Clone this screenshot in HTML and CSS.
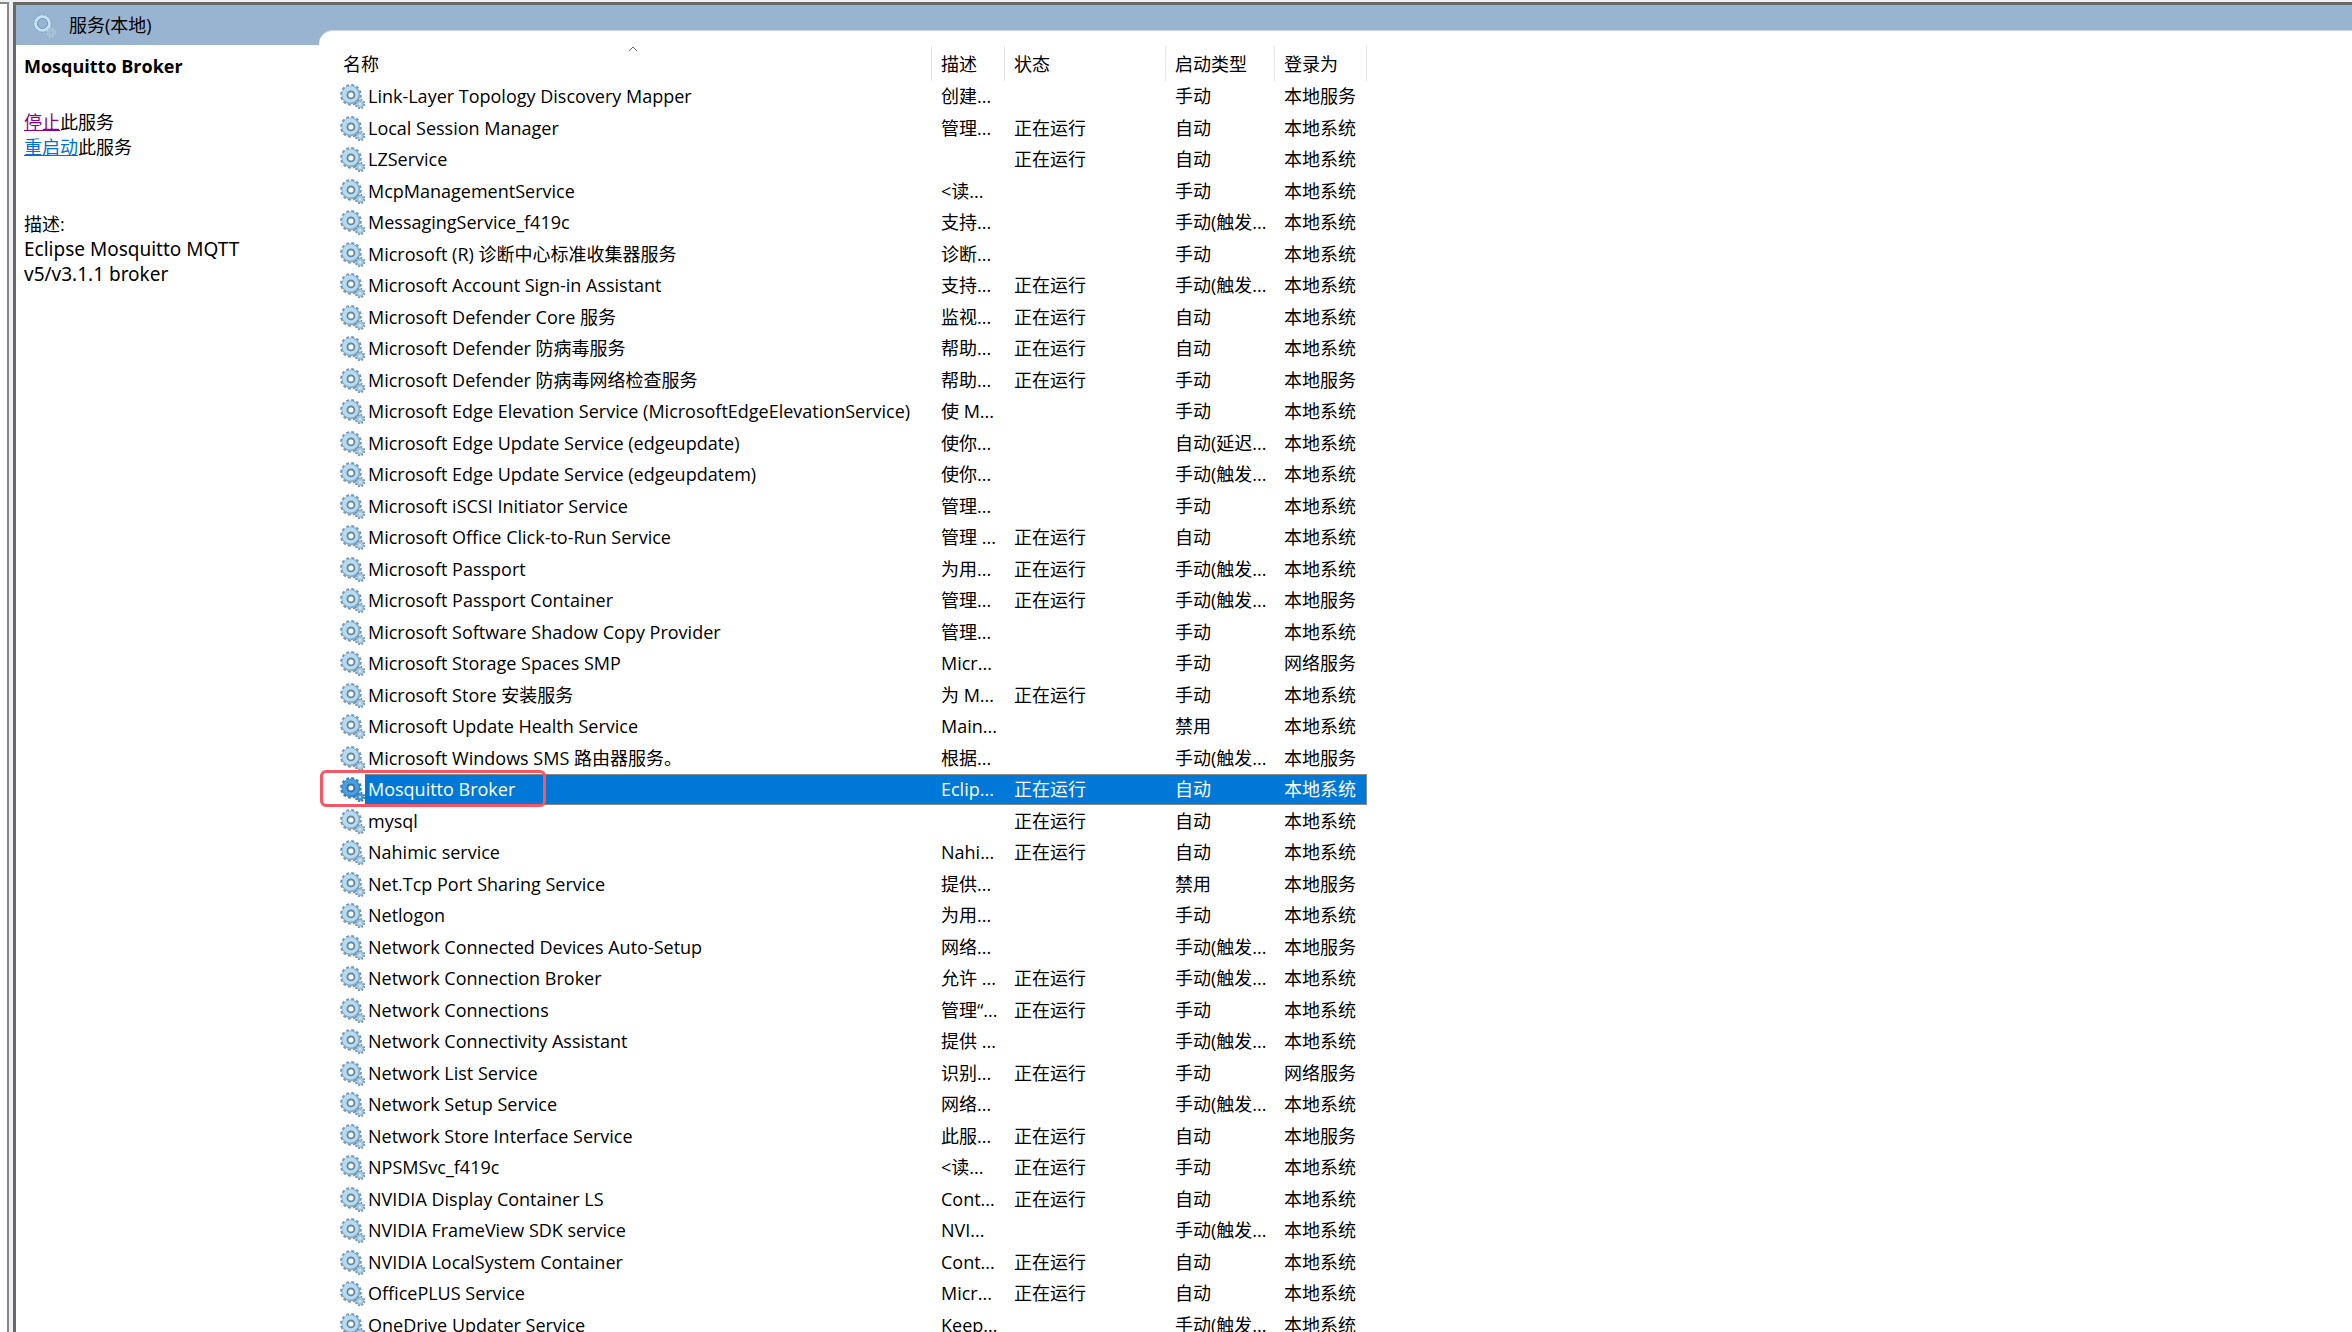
FILE: index.html
```
<!DOCTYPE html>
<html lang="zh-CN">
<head>
    <meta charset="UTF-8">
    <meta name="viewport" content="width=device-width, initial-scale=1.0">
    <title>服务</title>
    <link rel="stylesheet" href="styles.css">
</head>
<body>
    <svg class="defs" aria-hidden="true">
        <symbol id="gear" viewBox="0 0 24 24">
            <circle class="teeth" cx="10.5" cy="10.5" r="8.8" stroke-width="3.2" stroke-dasharray="2.6 2.01"/>
            <circle class="edge" cx="10.5" cy="10.5" r="5.8" stroke-width="6.4"/>
            <circle class="body" cx="10" cy="10" r="5.6" stroke-width="4.4"/>
            <circle class="rim" cx="10.5" cy="10.5" r="3.4" stroke-width="1.6"/>
            <circle class="teeth" cx="19.2" cy="19.2" r="3.8" stroke-width="2.6" stroke-dasharray="1.6 1.38"/>
            <circle class="edge" cx="19.2" cy="19.2" r="2.2" stroke-width="2.6"/>
            <circle class="body" cx="19.2" cy="19.2" r="2" stroke-width="1.2"/>
        </symbol>
    </svg>

    <div class="tree"></div>
    <div class="console">
        <div class="title-bar">
            <svg class="title-icon" viewBox="0 0 24 24" aria-hidden="true">
                <circle cx="9.5" cy="9.5" r="8.5" fill="none" stroke="#86a9c6" stroke-width="2" stroke-dasharray="2 2.45"/>
                <circle cx="9.5" cy="9.5" r="6.8" fill="none" stroke="#c4e4f4" stroke-width="3"/>
                <circle cx="9.5" cy="9.5" r="5" fill="none" stroke="#7595b8" stroke-width="1"/>
                <circle cx="18" cy="18.5" r="3" fill="none" stroke="#a9c6da" stroke-width="4" stroke-dasharray="1.6 0.76"/>
            </svg>
            <span>服务(本地)</span>
        </div>
        <div class="content">
            <div class="info">
                <h1>Mosquitto Broker</h1>
                <p class="actions">
                    <a href="#" class="stop">停止</a>此服务<br>
                    <a href="#" class="restart">重启动</a>此服务
                </p>
                <p>描述:</p>
                <p class="description">Eclipse Mosquitto MQTT v5/v3.1.1 broker</p>
            </div>
            <div class="list">
                <table>
                    <thead>
                        <tr>
                            <th class="col-name">名称<svg class="sort" viewBox="0 0 10 6" aria-hidden="true"><path d="M1 5l4-4 4 4"/></svg></th>
                            <th class="col-desc">描述</th>
                            <th class="col-status">状态</th>
                            <th class="col-type">启动类型</th>
                            <th class="col-logon">登录为</th>
                        </tr>
                    </thead>
                    <tbody id="service-list"></tbody>
                </table>
            </div>
        </div>
    </div>

    <script>
        const R = '正在运行';
        const SYS = '本地系统';
        const LOCAL = '本地服务';
        const NET = '网络服务';
        const TRIGGER = '手动(触发...';

        // name, description, status, startup type, log on as
        const services = [
            ['Link-Layer Topology Discovery Mapper', '创建...', '', '手动', LOCAL],
            ['Local Session Manager', '管理...', R, '自动', SYS],
            ['LZService', '', R, '自动', SYS],
            ['McpManagementService', '<读...', '', '手动', SYS],
            ['MessagingService_f419c', '支持...', '', TRIGGER, SYS],
            ['Microsoft (R) 诊断中心标准收集器服务', '诊断...', '', '手动', SYS],
            ['Microsoft Account Sign-in Assistant', '支持...', R, TRIGGER, SYS],
            ['Microsoft Defender Core 服务', '监视...', R, '自动', SYS],
            ['Microsoft Defender 防病毒服务', '帮助...', R, '自动', SYS],
            ['Microsoft Defender 防病毒网络检查服务', '帮助...', R, '手动', LOCAL],
            ['Microsoft Edge Elevation Service (MicrosoftEdgeElevationService)', '使 M...', '', '手动', SYS],
            ['Microsoft Edge Update Service (edgeupdate)', '使你...', '', '自动(延迟...', SYS],
            ['Microsoft Edge Update Service (edgeupdatem)', '使你...', '', TRIGGER, SYS],
            ['Microsoft iSCSI Initiator Service', '管理...', '', '手动', SYS],
            ['Microsoft Office Click-to-Run Service', '管理 ...', R, '自动', SYS],
            ['Microsoft Passport', '为用...', R, TRIGGER, SYS],
            ['Microsoft Passport Container', '管理...', R, TRIGGER, LOCAL],
            ['Microsoft Software Shadow Copy Provider', '管理...', '', '手动', SYS],
            ['Microsoft Storage Spaces SMP', 'Micr...', '', '手动', NET],
            ['Microsoft Store 安装服务', '为 M...', R, '手动', SYS],
            ['Microsoft Update Health Service', 'Main...', '', '禁用', SYS],
            ['Microsoft Windows SMS 路由器服务。', '根据...', '', TRIGGER, LOCAL],
            ['Mosquitto Broker', 'Eclip...', R, '自动', SYS],
            ['mysql', '', R, '自动', SYS],
            ['Nahimic service', 'Nahi...', R, '自动', SYS],
            ['Net.Tcp Port Sharing Service', '提供...', '', '禁用', LOCAL],
            ['Netlogon', '为用...', '', '手动', SYS],
            ['Network Connected Devices Auto-Setup', '网络...', '', TRIGGER, LOCAL],
            ['Network Connection Broker', '允许 ...', R, TRIGGER, SYS],
            ['Network Connections', '管理“...', R, '手动', SYS],
            ['Network Connectivity Assistant', '提供 ...', '', TRIGGER, SYS],
            ['Network List Service', '识别...', R, '手动', NET],
            ['Network Setup Service', '网络...', '', TRIGGER, SYS],
            ['Network Store Interface Service', '此服...', R, '自动', LOCAL],
            ['NPSMSvc_f419c', '<读...', R, '手动', SYS],
            ['NVIDIA Display Container LS', 'Cont...', R, '自动', SYS],
            ['NVIDIA FrameView SDK service', 'NVI...', '', TRIGGER, SYS],
            ['NVIDIA LocalSystem Container', 'Cont...', R, '自动', SYS],
            ['OfficePLUS Service', 'Micr...', R, '自动', SYS],
            ['OneDrive Updater Service', 'Keep...', '', TRIGGER, SYS]
        ];
        const selected = 'Mosquitto Broker';

        const list = document.getElementById('service-list');

        services.forEach(service => {
            const row = document.createElement('tr');
            const [name, ...rest] = service;
            row.innerHTML = `
                <td>
                    <div class="name-cell">
                        <svg class="gear"><use href="#gear"/></svg>
                        <span class="name">${name}</span>
                    </div>
                </td>
                ${rest.map(text => `<td>${text.replace('<', '&lt;')}</td>`).join('')}
            `;
            if (name === selected) {
                row.className = 'selected';
                row.querySelector('.name-cell').insertAdjacentHTML('beforeend', '<span class="marker"></span>');
            }
            list.appendChild(row);
        });
    </script>
</body>
</html>
```
FILE: styles.css
```
* {
    box-sizing: border-box;
}
body {
    margin: 0;
    height: 100vh;
    overflow: hidden;
    display: flex;
    gap: 4px;
    padding-top: 2px;
    background-color: #f0f0f0;
    color: #000;
    font-family: "Open Sans", "Noto Sans CJK SC", sans-serif;
    font-size: 18px;
    line-height: 25px;
}
.defs {
    position: absolute;
    width: 0;
    height: 0;
}
.tree {
    width: 9px;
    background-color: #fff;
    border-top: 2px solid #828790;
    border-right: 2px solid #828790;
}
.console {
    flex: 1;
    display: flex;
    flex-direction: column;
    min-width: 0;
    background-color: #fff;
    border-top: 3px solid #696969;
    border-left: 3px solid #696969;
}
.title-bar {
    flex: none;
    display: flex;
    align-items: center;
    height: 40px;
    padding: 1px 0 0 17px;
    gap: 12px;
    background-color: #99b4d1;
}
.title-icon {
    width: 24px;
    height: 24px;
}
.content {
    flex: 1;
    display: flex;
    min-height: 0;
}
.info {
    width: 303px;
    padding: 9px 40px 0 8px;
}
.info h1 {
    margin: 0;
    font-size: 18px;
}
.info p {
    margin: 0;
}
.info .actions {
    margin: 31px 0 52px;
}
.info .description {
    font-family: "Noto Sans", "Noto Sans CJK SC", sans-serif;
    font-size: 19px;
}
a.stop {
    color: #8b008b;
}
a.restart {
    color: #0070d8;
}
.list {
    flex: 1;
    margin-top: -15px;
    padding: 15px 0 0 16px;
    background-color: #fff;
    border-top: 1px solid #c8d6ea;
    border-top-left-radius: 14px;
}
table {
    table-layout: fixed;
    width: 1032px;
    border-collapse: separate;
    border-spacing: 0;
}
th, td {
    padding: 0 0 0 9px;
    text-align: left;
    white-space: nowrap;
}
th {
    position: relative;
    height: 35px;
    padding-top: 1px;
    font-weight: normal;
    border-right: 1px solid #e5e5e5;
}
th:first-child {
    padding-left: 8px;
}
td:first-child {
    padding-left: 5px;
}
.col-name {
    width: 597px;
}
.col-desc {
    width: 73px;
}
.col-status {
    width: 161px;
}
.col-type {
    width: 109px;
}
.col-logon {
    width: 92px;
}
.sort {
    position: absolute;
    top: 0;
    left: 50%;
    width: 10px;
    height: 6px;
    margin-left: -5px;
    fill: none;
    stroke: #707070;
}
tbody tr {
    height: 31px;
}
tbody tr:nth-child(even) {
    height: 32px;
}
.name-cell {
    position: relative;
    display: flex;
    align-items: center;
    height: 31px;
}
.gear {
    --teeth: #7495b6;
    --edge: #86abc9;
    --body: #b8dcef;
    --rim: #64859f;
    flex: none;
    width: 25px;
    height: 25px;
}
.teeth {
    fill: none;
    stroke: var(--teeth);
}
.edge {
    fill: none;
    stroke: var(--edge);
}
.body {
    fill: none;
    stroke: var(--body);
}
.rim {
    fill: none;
    stroke: var(--rim);
}
.name {
    flex: 1;
    padding-left: 3px;
}
.selected td {
    color: #fff;
}
.selected .name,
.selected td:not(:first-child) {
    background-color: #0078d7;
    border-top: 1px solid #8a8a80;
    border-bottom: 1px solid #8a8a80;
}
.selected td:last-child {
    border-right: 1px solid #8a8a80;
}
.selected .name {
    height: 31px;
    line-height: 29px;
}
.selected .gear {
    --teeth: #3a80c0;
    --edge: #3585cc;
    --body: #4d9fdc;
    --rim: #2a6cb0;
}
.marker {
    position: absolute;
    top: -4px;
    left: -20px;
    width: 226px;
    height: 37px;
    border: 3px solid #fb5465;
    border-radius: 6px;
}
```
